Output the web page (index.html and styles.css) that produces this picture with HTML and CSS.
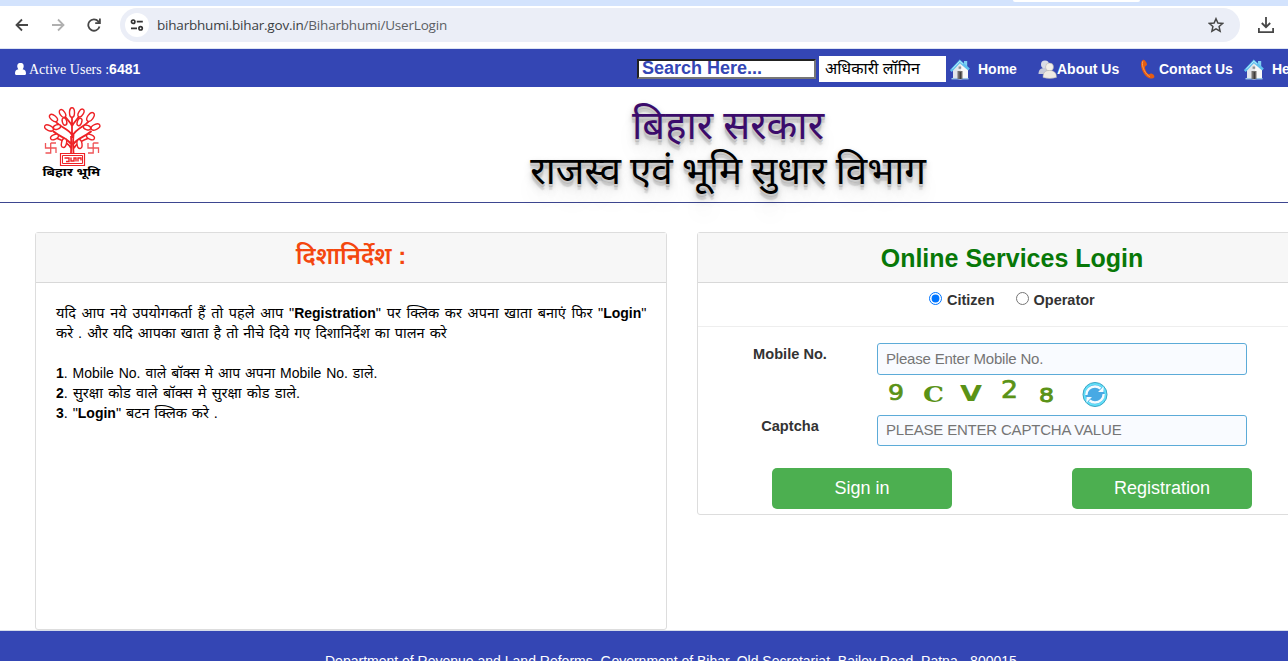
FILE: index.html
```html
<!DOCTYPE html>
<html lang="hi">
<head>
    <meta charset="UTF-8">
    <meta name="viewport" content="width=device-width, initial-scale=1.0">
    <title>Bihar Bhumi</title>
    <link rel="stylesheet" href="styles.css">
</head>
<body>

<!-- icons used more than once -->
<svg class="defs" width="0" height="0">
    <symbol id="icon-home" viewBox="0 0 20 21">
        <path d="M14 2h3.200v6H14z" fill="#7fd0f2"/>
        <path d="M3 10.500v8.500l7 1.500 8-1.500v-9L10 3z" fill="#e4e6ea"/>
        <path d="M11 6l7 5v8l-7 1z" fill="#f8f8f8"/>
        <path d="M.8 12L9.800 2.400 19 10.500" fill="none" stroke="#5fc0ee" stroke-width="2.600"/>
        <path d="M2.500 9.800L9.800 2.200l3 2.700" fill="none" stroke="#b9ecfb" stroke-width="1"/>
        <path d="M1.500 19.700h17" stroke="#9fc7e6" stroke-width="1.500"/>
        <path d="M7.500 12h5v8h-5z" fill="#74716f"/>
        <path d="M9.600 13h1.600v7H9.600z" fill="#3e3c3b"/>
        <path d="M8.600 7.500h2.600v2.300H8.600z" fill="#8b9095"/>
    </symbol>
</svg>

<div class="tabstrip"><div class="tab"></div></div>
<div class="toolbar">
    <svg class="tool" width="14" height="14" viewBox="0 0 14 14"><path d="M13 7H2M7 1.500L1.500 7 7 12.500" stroke="#474747"/></svg>
    <svg class="tool" width="14" height="14" viewBox="0 0 14 14"><path d="M1 7h11M7 1.500L12.500 7 7 12.500" stroke="#b0b0b0"/></svg>
    <svg class="tool" width="14" height="14" viewBox="0 0 14 14"><path d="M12.500 8.500A5.700 5.700 0 1 1 11.300 3.300L12.800 5M12.900.5V5.200H8.200" stroke="#474747"/></svg>
    <div class="urlbar">
        <div class="site-info">
            <svg width="14" height="12" viewBox="0 0 14 12"><g fill="none" stroke="#333" stroke-width="1.700"><circle cx="3.200" cy="2.700" r="1.700"/><path d="M6.800 2.700h6M1 9.300h6"/><circle cx="10.600" cy="9.300" r="1.700"/></g></svg>
        </div>
        <span class="url">biharbhumi.bihar.gov.in<em>/Biharbhumi/UserLogin</em></span>
        <svg class="star" width="16" height="16" viewBox="0 0 16 16"><path d="M8 1.700l1.900 4.300 4.700.45-3.500 3.100 1 4.600L8 11.800l-4.100 2.350 1-4.600-3.500-3.100L6.100 6z" fill="none" stroke="#474747" stroke-width="1.500"/></svg>
    </div>
    <svg class="tool download" width="16" height="16" viewBox="0 0 16 16"><path d="M8 0v10M3.800 6L8 10.200 12.200 6M.9 11v4.100h14.200V11" stroke="#474747"/></svg>
</div>

<div class="topbar">
    <svg class="user-icon" width="11" height="12" viewBox="0 0 11 12"><path d="M5.500 0C8.400 0 9 2.200 8.600 4.200c-.3 1-.6 1.600-1 2C10 6.700 11 7.800 11 10.500 11 11.400 10.500 12 9.500 12h-8C.5 12 0 11.400 0 10.500 0 7.800 1 6.700 3.400 6.200c-.4-.4-.7-1-1-2C2 2.200 2.600 0 5.500 0z" fill="#fff"/></svg>
    <span class="active-users">Active Users :<b>6481</b></span>
    <input class="search" type="text" placeholder="Search Here...">
    <div class="officer-login">अधिकारी लॉगिन</div>
    <nav class="menu">
        <a class="home"><svg width="20" height="21"><use href="#icon-home"/></svg>Home</a>
        <a class="about"><svg width="19" height="19" viewBox="0 0 19 19"><circle cx="7" cy="4.500" r="4" fill="#d9dce6"/><path d="M.5 14c0-4 2-6 6-6 3 0 5 2 5 6z" fill="#c6cada"/><circle cx="11.500" cy="7" r="4" fill="#f3f0e9" stroke="#aaa8a6" stroke-width=".5"/><path d="M5 17.500c0-5 2-7 6.500-7s7 2 7 7q-7 2-13.500 0z" fill="#eeeae3" stroke="#aaa8a6" stroke-width=".5"/></svg>About Us</a>
        <a class="contact"><svg width="15" height="20" viewBox="0 0 15 20"><path d="M3 .7C1 2 .3 5 1.500 9c1.200 4.500 4.300 9.300 8.300 10.400 2 .5 4-.3 4.600-1.500.4-1-1.600-3.200-3-3.300-1 0-1.600.9-2.600.7-1.900-.5-4.100-5.200-3.800-7.200.3-1.200 2-1.200 2-2.500C7.100 4 5 .3 3 .7z" fill="#e45c12"/><path d="M2.800 2.200c-1 2.500 0 6.500 1.500 9.300 1.500 3 3.500 5.200 5.500 6" fill="none" stroke="#ff9d52" stroke-width="1"/></svg>Contact Us</a>
        <a class="help"><svg width="20" height="21"><use href="#icon-home"/></svg>Help</a>
    </nav>
</div>

<header class="header">
    <div class="logo">
        <svg width="58" height="60" viewBox="0 0 58 60" fill="none" stroke="#ee2226" stroke-width="1.500">
            <!-- trunk and branches -->
            <path d="M27 46c.5-7 .5-12 0-17M29.500 46c-.5-8-.5-13 0-18M28 31V10M27 37C23 31 14 29 9 24M29.500 37c4-6 13-8 18-13M28 28c-3-6-12-8-16-13M29 28c3-6 12-9 16-14M28 19c-1-4-5-6-8-11M28 19c2-4 5-6 8-11M27 41c-3-5-9-8-15-10M30 41c3-5 9-8 15-10" stroke-width="1.800"/>
            <!-- leaves -->
            <g fill="#fff" stroke-width="1.400">
                <ellipse cx="28" cy="5.500" rx="2.500" ry="4.800"/>
                <ellipse cx="18.500" cy="6.500" rx="2.500" ry="4.300" transform="rotate(-35 18.500 6.500)"/>
                <ellipse cx="37" cy="6" rx="2.400" ry="4.300" transform="rotate(30 37 6)"/>
                <ellipse cx="9.500" cy="11" rx="2.600" ry="4.700" transform="rotate(-50 9.500 11)"/>
                <ellipse cx="46.500" cy="10" rx="2.800" ry="5" transform="rotate(35 46.500 10)"/>
                <ellipse cx="5" cy="21" rx="2.500" ry="4.700" transform="rotate(-65 5 21)"/>
                <ellipse cx="51.500" cy="20" rx="2.500" ry="4.700" transform="rotate(65 51.500 20)"/>
                <ellipse cx="20.500" cy="14.500" rx="2.200" ry="3.800" transform="rotate(-15 20.500 14.500)"/>
                <ellipse cx="35.500" cy="15" rx="2.200" ry="3.800" transform="rotate(20 35.500 15)"/>
                <ellipse cx="13" cy="20" rx="2.200" ry="3.800" transform="rotate(70 13 20)"/>
                <ellipse cx="43" cy="20.500" rx="2.200" ry="3.800" transform="rotate(-70 43 20.500)"/>
                <ellipse cx="10.500" cy="30" rx="2.300" ry="4.200" transform="rotate(65 10.500 30)"/>
                <ellipse cx="46.500" cy="30" rx="2.300" ry="4.200" transform="rotate(-65 46.500 30)"/>
                <ellipse cx="20" cy="36" rx="2.500" ry="4.500" transform="rotate(12 20 36)"/>
                <ellipse cx="35.500" cy="37" rx="2.500" ry="4.500" transform="rotate(-8 35.500 37)"/>
            </g>
            <!-- side marks -->
            <g stroke="#ef5558" stroke-width="1.300">
                <path d="M1.500 36v5h10.500v5M6.700 36v10H1.500M6.700 36H12M44 36v5h10.500v5M49.200 36v10H44M49.200 36h5.300"/>
            </g>
            <path d="M16.500 46.500h24v12h-24z" fill="#fff" stroke-width="1.200"/>
            <path d="M18.500 48.500h20v8h-20z" stroke-width="1"/>
            <path d="M20.500 51h4.500v3.500h-3M27 50.500v3.500h3v-3h2v3.500M34 54.500v-3.500h3v2.500" stroke-width="1.400"/>
        </svg>
        <span class="logo-name">बिहार भूमि</span>
    </div>
    <div class="titles">
        <h1 class="state">बिहार सरकार</h1>
        <h1 class="dept">राजस्व एवं भूमि सुधार विभाग</h1>
    </div>
</header>

<div class="main">
    <div class="card guide">
        <div class="card-header guide-title">दिशानिर्देश :</div>
        <div class="guide-body">
            <p><span class="line l1">यदि आप नये उपयोगकर्ता हैं तो पहले आप "<b>Registration</b>" पर क्लिक कर अपना खाता बनाएं फिर "<b>Login</b>"</span>
            <span class="line l2">करे . और यदि आपका खाता है तो नीचे दिये गए दिशानिर्देश का पालन करे</span></p>
            <p><span class="line l3"><b>1</b>. Mobile No. वाले बॉक्स मे आप अपना Mobile No. डाले.</span>
            <span class="line l4"><b>2</b>. सुरक्षा कोड वाले बॉक्स मे सुरक्षा कोड डाले.</span>
            <span class="line l5"><b>3</b>. "<b>Login</b>" बटन क्लिक करे .</span></p>
        </div>
    </div>

    <div class="card login">
        <div class="card-header login-title">Online Services Login</div>
        <div class="user-type">
            <label><input type="radio" name="usertype" checked>Citizen</label>
            <label><input type="radio" name="usertype">Operator</label>
        </div>
        <form class="login-form">
            <label for="mobile">Mobile No.</label>
            <input id="mobile" type="text" placeholder="Please Enter Mobile No.">
            <div class="captcha">
                <svg width="240" height="40" viewBox="0 0 240 40" fill="#5a9216" font-weight="bold">
                    <text x="11" y="25" font-family="DejaVu Sans" font-weight="normal" stroke="#5a9216" stroke-width=".7" font-size="22" textLength="16" lengthAdjust="spacingAndGlyphs">9</text>
                    <text x="46" y="27" font-family="DejaVu Serif" font-size="22" textLength="21" lengthAdjust="spacingAndGlyphs">C</text>
                    <text x="83" y="26" font-family="DejaVu Sans" font-size="21" textLength="22" lengthAdjust="spacingAndGlyphs">V</text>
                    <text x="124" y="23" font-family="DejaVu Sans" font-weight="normal" stroke="#5a9216" stroke-width=".7" font-size="24" textLength="17" lengthAdjust="spacingAndGlyphs">2</text>
                    <text x="162" y="27" font-family="DejaVu Sans" font-weight="normal" stroke="#5a9216" stroke-width=".9" font-size="19" textLength="15" lengthAdjust="spacingAndGlyphs">8</text>
                    <!-- refresh button -->
                    <circle cx="218" cy="19.500" r="12" fill="#62e0f8" stroke="#3ba3c5" stroke-width="1"/>
                    <circle cx="218" cy="19.500" r="9.700" fill="#48a9e4"/>
                    <path d="M209.300 20c0-5 4-8.500 8.700-8.500 2.300 0 4 .8 5.500 2M226.700 19c0 5-4 8.500-8.700 8.500-2.300 0-4-.8-5.500-2" fill="none" stroke="#f4fcff" stroke-width="2.400"/>
                    <path d="M221 17h5.500v-5.500zM215 22h-5.500v5.500z" fill="#f4fcff"/>
                </svg>
            </div>
            <label for="captcha">Captcha</label>
            <input id="captcha" type="text" placeholder="PLEASE ENTER CAPTCHA VALUE">
        </form>
        <div class="buttons">
            <button type="button">Sign in</button>
            <button type="button">Registration</button>
        </div>
    </div>
</div>

<footer class="footer">Department of Revenue and Land Reforms, Government of Bihar, Old Secretariat, Bailey Road, Patna - 800015</footer>

</body>
</html>
```
FILE: styles.css
```css
* {
    box-sizing: border-box;
}

body {
    margin: 0;
    width: 1288px;
    height: 661px;
    overflow: hidden;
    background-color: #fff;
    font-family: "Liberation Sans", "Noto Sans", "Noto Sans Devanagari", sans-serif;
    font-size: 14px;
    color: #000;
    white-space: nowrap;
}

.defs {
    display: none;
}

/* browser bar */
.tabstrip {
    height: 6px;
    padding-left: 1013px;
    background-color: #d3e3fd;
}

.tab {
    width: 127px;
    height: 2px;
    border-radius: 0 0 6px 6px;
    background-color: #fff;
}

.toolbar {
    display: flex;
    align-items: center;
    height: 43px;
    padding: 0 14px 4px 15px;
    border-bottom: 1px solid #dde4f2;
    background-color: #fff;
}

.tool {
    flex: none;
    margin-right: 22px;
    fill: none;
    stroke-width: 1.8;
}

.urlbar {
    display: flex;
    align-items: center;
    flex: none;
    width: 1120px;
    height: 34px;
    margin-left: -3px;
    padding: 0 16px 0 5px;
    border-radius: 17px;
    background-color: #ebeef7;
}

.site-info {
    display: flex;
    align-items: center;
    justify-content: center;
    width: 24px;
    height: 24px;
    margin-right: 8px;
    border-radius: 50%;
    background-color: #fff;
}

.url {
    flex: 1;
    font-family: "Open Sans", sans-serif;
    font-size: 13.5px;
    letter-spacing: -0.2px;
    color: #3b3e43;
}

.url em {
    font-style: normal;
    color: #5b5e64;
}

.download {
    margin: 0 0 0 18px;
}

/* blue bar */
.topbar {
    display: flex;
    align-items: center;
    height: 38px;
    padding: 2px 0 0 15px;
    background-color: #3446b4;
    color: #fff;
}

.user-icon {
    flex: none;
}

.active-users {
    flex: none;
    width: 608px;
    margin-left: 3px;
    font-family: "Liberation Serif", serif;
}

.active-users b {
    font-family: "Liberation Sans", sans-serif;
}

.search {
    flex: none;
    width: 179px;
    height: 20px;
    padding: 0 2px 1px 3px;
    border: 2px inset #767676;
    background-color: #fff;
    font: bold 18px/15px "Liberation Sans", sans-serif;
}

.search::placeholder {
    color: #3446b4;
    opacity: 1;
}

.officer-login {
    flex: none;
    width: 127px;
    height: 26px;
    margin-left: 3px;
    padding-left: 6px;
    background-color: #fff;
    color: #000;
    font-size: 16px;
    line-height: 26px;
}

.menu {
    display: flex;
    align-items: center;
    flex: none;
    height: 26px;
    font-weight: bold;
}

.menu a {
    display: flex;
    align-items: center;
    flex: none;
}

.home {
    width: 92px;
    padding-left: 4px;
    gap: 8px;
}

.about {
    width: 101px;
}

.contact {
    width: 104px;
    padding-left: 1px;
    gap: 4px;
}

.help {
    padding-left: 1px;
    gap: 8px;
}

/* department header */
.header {
    display: flex;
    height: 116px;
    border-bottom: 1px solid #3d4690;
}

.logo {
    display: flex;
    flex-direction: column;
    align-items: center;
    width: 60px;
    margin: 20px 0 0 41px;
}

.logo svg {
    flex: none;
    margin-left: 4px;
}

.logo-name {
    margin-top: -1px;
    font-size: 12px;
    font-weight: bold;
    line-height: 13px;
    transform: scale(1.14, .92);
}

.titles {
    width: 396px;
    margin: 16px 0 0 429px;
    text-align: center;
}

.titles h1 {
    height: 45px;
    margin: 0;
    font-size: 40px;
    font-weight: normal;
    line-height: 45px;
    text-shadow: 0 1px 0 #ccc, 0 2px 0 #c9c9c9, 0 3px 0 #bbb, 0 6px 1px rgba(0, 0, 0, .1), 0 3px 5px rgba(0, 0, 0, .2), 0 5px 10px rgba(0, 0, 0, .2), 0 20px 20px rgba(0, 0, 0, .08);
}

.titles .state {
    color: #3b0b6b;
    word-spacing: -1px;
}

.titles .dept {
    font-size: 38.5px;
    word-spacing: -1.5px;
}

/* cards */
.main {
    display: flex;
    align-items: flex-start;
    gap: 30px;
    height: 427px;
    padding: 29px 0 0 35px;
}

.card {
    flex: none;
    width: 632px;
    border: 1px solid #ddd;
    border-radius: 3px;
}

.guide {
    height: 398px;
}

.login {
    height: 283px;
}

.card-header {
    height: 50px;
    border-bottom: 1px solid #d8d8d8;
    background-color: #f7f7f7;
    text-align: center;
}

.guide-title {
    color: #f4470f;
    font-size: 24px;
    font-weight: 600;
    line-height: 46px;
}

.guide-body {
    padding: 20px;
}

.guide-body p {
    margin: 0 0 20px;
    line-height: 20px;
}

.line {
    display: block;
    height: 20px;
    font-size: 14.5px;
}

.line b {
    font-size: 14px;
}

.l1 {
    word-spacing: 1.65px;
}

.l2 {
    word-spacing: 1px;
}

.l3 {
    font-size: 14px;
    word-spacing: 1px;
}

.l4 {
    word-spacing: 1.2px;
}

.l5 {
    word-spacing: .8px;
}

.login-title {
    padding-right: 2px;
    color: #087808;
    font-size: 25px;
    font-weight: bold;
    line-height: 50px;
}

.user-type {
    display: flex;
    gap: 21px;
    height: 44px;
    padding: 8px 0 0 231px;
    border-bottom: 1px solid #eee;
    color: #333;
    font-size: 14.5px;
    font-weight: bold;
}

.user-type label {
    display: flex;
    align-items: flex-start;
    line-height: 18px;
}

.user-type input {
    width: 13px;
    height: 13px;
    margin: 1px 5px 0 0;
}

.login-form {
    display: grid;
    grid-template-columns: 179px 370px;
    grid-template-rows: 32px 40px 31px;
    justify-items: center;
    padding: 16px 0 0;
    color: #333;
    font-size: 14.6px;
    font-weight: bold;
}

.login-form label {
    padding-left: 5px;
    line-height: 22px;
}

.login-form input {
    width: 370px;
    height: 100%;
    padding: 0 8px 2px;
    border: 1px solid #5cabd8;
    border-radius: 3px;
    background-color: #f9fbff;
    font: 15px "Liberation Sans", sans-serif;
    letter-spacing: -0.2px;
}

.login-form input::placeholder {
    color: #757575;
}

.captcha {
    grid-column: 2;
    justify-self: start;
    height: 40px;
}

.buttons {
    display: flex;
    gap: 120px;
    padding: 22px 0 0 74px;
}

.buttons button {
    width: 180px;
    height: 41px;
    border: none;
    border-radius: 5px;
    background-color: #4caf50;
    color: #fff;
    font: 18px "Liberation Sans", sans-serif;
}

/* footer */
.footer {
    height: 32px;
    padding: 22px 0 0 325px;
    border-top: 1px solid #d5dbea;
    background-color: #3446b4;
    color: #fff;
}
```
